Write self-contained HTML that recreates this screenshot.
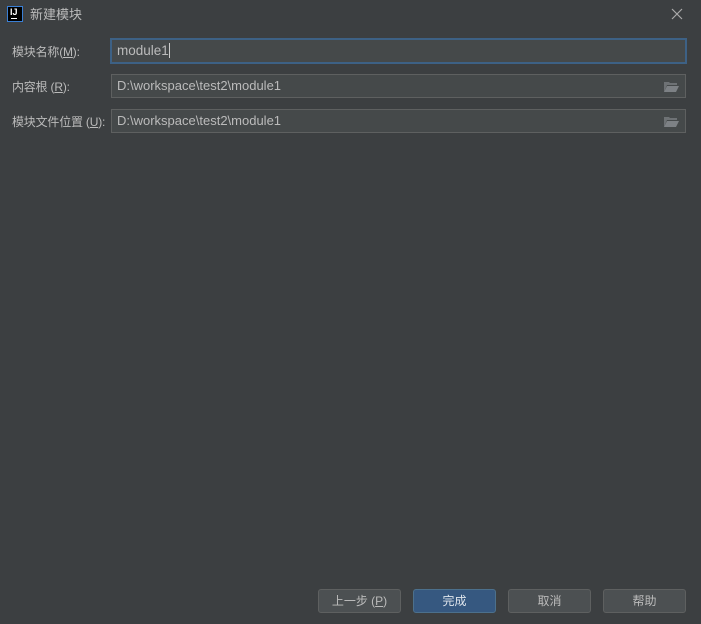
<!DOCTYPE html>
<html><head><meta charset="utf-8"><style>
body{margin:0;width:701px;height:624px;background:#3c3f41;font-family:"Liberation Sans","Noto Sans CJK SC",sans-serif;color:#bbbbbb;position:relative;overflow:hidden;font-size:13px}
.a{position:absolute}
.l{position:absolute;left:12px;font-size:12px;line-height:17px;letter-spacing:-0.2px}
.f{position:absolute;background:#45494a;border:1px solid #5e6060;box-sizing:border-box;color:#bbbbbb;padding-left:5px;line-height:21px;font-size:13px}
.b{position:absolute;top:589px;height:24px;width:83px;box-sizing:border-box;border:1px solid #5e6060;background:#4c5052;border-radius:3px;text-align:center;line-height:22px;font-size:12px;color:#bbbbbb}
.fold{position:absolute;right:6px;top:6px}
u{text-decoration:underline}
</style></head><body>
<div class="a" style="left:7px;top:6px;width:16px;height:16px;background:#000;border:1px solid #3a7fd5;box-sizing:border-box">
<div class="a" style="left:2px;top:1px;color:#fff;font-size:9px;font-weight:bold;line-height:9px">IJ</div>
<div class="a" style="left:3px;top:11px;width:6px;height:1px;background:#fff"></div></div>
<div class="a" style="left:30px;top:6px;font-size:13px;line-height:17px">新建模块</div>
<svg class="a" style="left:670px;top:7px" width="14" height="14"><path d="M2 2L12 12M12 2L2 12" stroke="#aaa" stroke-width="1.2"/></svg>
<div class="l" style="top:44px">模块名称(<u>M</u>):</div>
<div class="l" style="top:79px">内容根 (<u>R</u>):</div>
<div class="l" style="top:114px">模块文件位置 (<u>U</u>):</div>
<div class="f" style="left:110px;top:38px;width:577px;height:26px;border:2px solid #3d6185;padding-left:5px;line-height:22px;font-size:13.5px">module1<span style="display:inline-block;width:1px;height:15px;background:#ccc;vertical-align:-3px"></span></div>
<div class="f" style="left:111px;top:74px;width:575px;height:24px">D:\workspace\test2\module1
<svg class="fold" width="15" height="12"><path d="M0 1h5l1 1h7v2H3L0 11z" fill="#6e7275"/><path d="M3 5h12l-3 6H0z" fill="#7d8185"/></svg></div>
<div class="f" style="left:111px;top:109px;width:575px;height:24px">D:\workspace\test2\module1
<svg class="fold" width="15" height="12"><path d="M0 1h5l1 1h7v2H3L0 11z" fill="#6e7275"/><path d="M3 5h12l-3 6H0z" fill="#7d8185"/></svg></div>
<div class="b" style="left:318px">上一步 (<u>P</u>)</div>
<div class="b" style="left:413px;background:#365880;border-color:#4c708c;color:#dfe5ec">完成</div>
<div class="b" style="left:508px">取消</div>
<div class="b" style="left:603px">帮助</div>
</body></html>
